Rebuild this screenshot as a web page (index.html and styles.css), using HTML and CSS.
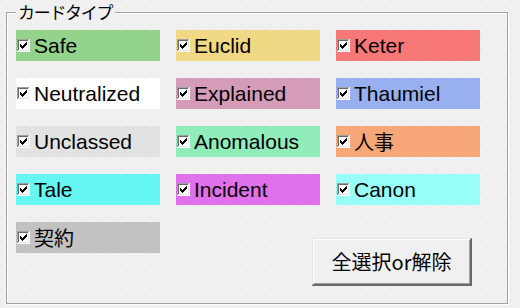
FILE: index.html
```html
<!DOCTYPE html>
<html lang="ja">
<head>
<meta charset="utf-8">
<link rel="stylesheet" href="styles.css">
</head>
<body>
<div class="group">
  <span class="legend">カードタイプ</span>
  <div class="grid">
    <label class="cell c-safe"><svg class="cb" viewBox="0 0 13 13"><use href="#chk"/></svg><span class="t">Safe</span></label>
    <label class="cell c-euclid"><svg class="cb" viewBox="0 0 13 13"><use href="#chk"/></svg><span class="t">Euclid</span></label>
    <label class="cell c-keter"><svg class="cb" viewBox="0 0 13 13"><use href="#chk"/></svg><span class="t">Keter</span></label>
    <label class="cell c-neutral"><svg class="cb" viewBox="0 0 13 13"><use href="#chk"/></svg><span class="t">Neutralized</span></label>
    <label class="cell c-explained"><svg class="cb" viewBox="0 0 13 13"><use href="#chk"/></svg><span class="t">Explained</span></label>
    <label class="cell c-thaumiel"><svg class="cb" viewBox="0 0 13 13"><use href="#chk"/></svg><span class="t">Thaumiel</span></label>
    <label class="cell c-unclassed"><svg class="cb" viewBox="0 0 13 13"><use href="#chk"/></svg><span class="t">Unclassed</span></label>
    <label class="cell c-anomalous"><svg class="cb" viewBox="0 0 13 13"><use href="#chk"/></svg><span class="t">Anomalous</span></label>
    <label class="cell c-jinji"><svg class="cb" viewBox="0 0 13 13"><use href="#chk"/></svg><span class="t jp">人事</span></label>
    <label class="cell c-tale"><svg class="cb" viewBox="0 0 13 13"><use href="#chk"/></svg><span class="t">Tale</span></label>
    <label class="cell c-incident"><svg class="cb" viewBox="0 0 13 13"><use href="#chk"/></svg><span class="t">Incident</span></label>
    <label class="cell c-canon"><svg class="cb" viewBox="0 0 13 13"><use href="#chk"/></svg><span class="t">Canon</span></label>
    <label class="cell c-keiyaku"><svg class="cb" viewBox="0 0 13 13"><use href="#chk"/></svg><span class="t jp">契約</span></label>
    <div class="btn-area"><button class="btn">全選択or解除</button></div>
  </div>
</div>
<svg width="0" height="0" class="defs">
  <defs>
    <g id="chk" shape-rendering="crispEdges">
      <rect x="0" y="0" width="13" height="13" fill="#ffffff"/>
      <path d="M0 0h12v1h-12z M0 1h1v11h-1z" fill="#a0a0a0"/>
      <path d="M1 1h10v1h-10z M1 2h1v9h-1z" fill="#696969"/>
      <path d="M1 11h11v1h-11z M11 1h1v10h-1z" fill="#e3e3e3"/>
      <path d="M0 12h13v1h-13z M12 0h1v12h-1z" fill="#ffffff"/>
      <path d="M9 3h1v1h-1z M8 4h2v1h-2z M3 5h1v1h-1z M7 5h3v1h-3z M3 6h2v1h-2z M6 6h3v1h-3z M3 7h5v1h-5z M4 8h3v1h-3z M5 9h1v1h-1z" fill="#000000"/>
    </g>
  </defs>
</svg>
</body>
</html>
```
FILE: styles.css
```css
html, body {
  margin: 0;
  padding: 0;
}
body {
  width: 520px;
  height: 308px;
  background-color: #f0f0f0;
  background-image: radial-gradient(circle at 1px 1px, #e4e4e4 0.6px, transparent 0.9px);
  background-size: 15px 12px;
  font-family: "Liberation Sans", Arial, sans-serif;
  overflow: hidden;
  padding: 12px 0 0 6px;
  box-sizing: border-box;
}
.defs {
  position: absolute;
  width: 0;
  height: 0;
}
.group {
  position: relative;
  width: 502px;
  height: 292px;
  border: 1px solid #a0a0a0;
  box-shadow: inset 1px 1px 0 #ffffff, 1px 1px 0 #ffffff;
  box-sizing: border-box;
  padding: 17px 0 0 9px;
}
.legend {
  position: absolute;
  left: 9px;
  top: -12px;
  padding: 0 3px 0 2px;
  background: #f0f0f0;
  font-family: "Noto Sans CJK JP", sans-serif;
  font-size: 17px;
  line-height: 22px;
  letter-spacing: -1.3px;
  color: #000;
}
.grid {
  display: grid;
  grid-template-columns: 144px 144px 144px;
  grid-auto-rows: 31px;
  column-gap: 16px;
  row-gap: 17px;
}
.cell {
  display: flex;
  align-items: center;
  height: 31px;
  padding-left: 1px;
  box-sizing: border-box;
  align-self: start;
}
.cb {
  width: 13px;
  height: 13px;
  flex: none;
}
.t {
  margin-left: 4px;
  font-size: 21px;
  line-height: 31px;
  color: #000;
  white-space: nowrap;
}
.t.jp {
  font-family: "Noto Sans CJK JP", sans-serif;
  font-size: 20px;
}
.c-safe { background: #94d38c; }
.c-euclid { background: #f0d884; }
.c-keter { background: #f87878; }
.c-neutral { background: #ffffff; }
.c-explained { background: #d49cb8; }
.c-thaumiel { background: #98b0f0; }
.c-unclassed { background: #e2e2e2; }
.c-anomalous { background: #90ecb8; }
.c-jinji { background: #f8a878; }
.c-tale { background: #66f6f4; }
.c-incident { background: #e070ec; }
.c-canon { background: #98fff8; }
.c-keiyaku { background: #c2c2c2; }
.btn-area {
  grid-column: 2 / span 2;
  display: flex;
  justify-content: flex-end;
  padding-top: 16px;
  padding-right: 8px;
}
.btn {
  width: 160px;
  height: 48px;
  margin: 0;
  padding: 0;
  background: #f0f0f0;
  border-style: solid;
  border-width: 1px 2px 2px 1px;
  border-color: #e3e3e3 #696969 #696969 #e3e3e3;
  box-shadow: inset 1px 1px 0 #ffffff, inset -1px -1px 0 #a0a0a0;
  font-family: "Noto Sans CJK JP", sans-serif;
  font-size: 20px;
  color: #000;
  box-sizing: border-box;
}
```
